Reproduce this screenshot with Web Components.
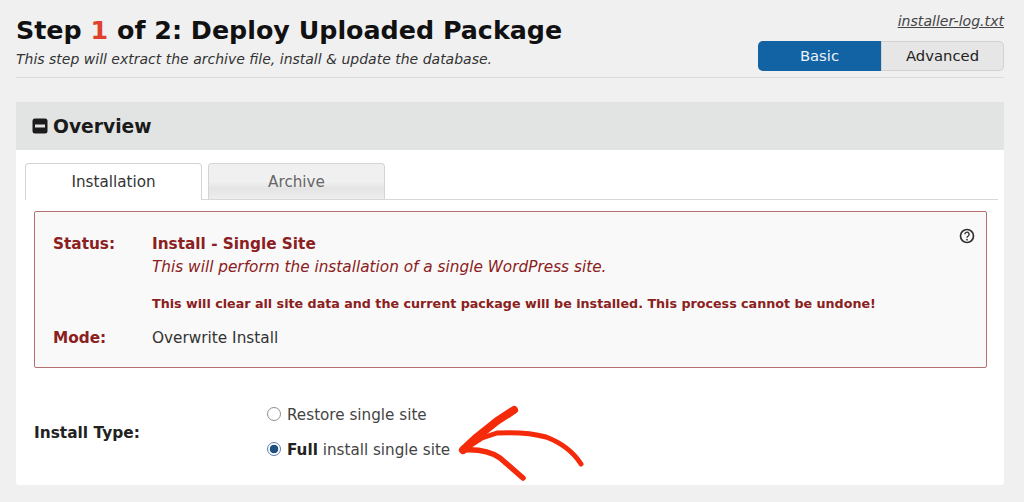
<!DOCTYPE html>
<html>
<head>
<meta charset="utf-8">
<title>Deploy Uploaded Package</title>
<style>
  html, body { margin: 0; height: 502px; overflow: hidden; background: #f0f0f1; }
  body { font-family: "DejaVu Sans", sans-serif; color: #222; }
</style>
</head>
<body>
<installer-step>
  <installer-header></installer-header>
  <overview-panel title="Overview">
    <tab-bar></tab-bar>
    <status-box></status-box>
    <install-type></install-type>
  </overview-panel>
</installer-step>

<script>
class InstallerStep extends HTMLElement {
  constructor() {
    super();
    this.attachShadow({ mode: 'open' }).innerHTML = `
      <style>
        :host { display: block; width: 988px; padding: 0 0 0 16px; }
      </style>
      <slot></slot>
    `;
  }
}

class InstallerHeader extends HTMLElement {
  constructor() {
    super();
    this.attachShadow({ mode: 'open' }).innerHTML = `
      <style>
        :host { display: flex; justify-content: space-between; height: 77px; border-bottom: 1px solid #dcdcdc; margin-bottom: 24px; }
        .left { padding-top: 14px; }
        h1 { margin: 0; font-size: 25.35px; line-height: 32px; font-weight: 700; color: #111; white-space: nowrap; }
        h1 span { color: #e0412c; }
        p { margin: 5px 0 0; font-size: 14px; line-height: 16px; font-style: italic; color: #333; white-space: nowrap; }
        .right { display: flex; flex-direction: column; align-items: flex-end; padding-top: 13px; }
        a { font-size: 14.1px; line-height: 16px; font-style: italic; color: #444; text-decoration: underline; }
        .toggle { display: flex; margin-top: 12px; height: 30px; width: 246px; border-radius: 5px; overflow: hidden; font-size: 14.8px; box-shadow: inset 0 0 0 1px #d2d2d2; }
        .toggle div { display: flex; align-items: center; justify-content: center; padding-bottom: 2px; box-sizing: border-box; }
        .on { width: 123px; background: #1263a3; color: #eef3f8; }
        .off { flex: 1; background: #e6e6e6; color: #222; box-shadow: inset 0 0 0 1px #d2d2d2; border-radius: 0 5px 5px 0; }
      </style>
      <div class="left">
        <h1>Step <span>1</span> of 2: Deploy Uploaded Package</h1>
        <p>This step will extract the archive file, install &amp; update the database.</p>
      </div>
      <div class="right">
        <a>installer-log.txt</a>
        <div class="toggle"><div class="on">Basic</div><div class="off">Advanced</div></div>
      </div>
    `;
  }
}

class OverviewPanel extends HTMLElement {
  constructor() {
    super();
    this.attachShadow({ mode: 'open' }).innerHTML = `
      <style>
        :host { display: block; position: relative; background: #fff; height: 383px; border-radius: 3px; }
        .head { display: flex; align-items: center; gap: 5px; height: 48px; padding-left: 16px; background: #e2e3e3; font-size: 18.7px; font-weight: 700; color: #1a1a1a; }
        .body { padding: 13px 0 0 9px; }
        svg { display: block; }
      </style>
      <div class="head">
        <svg width="16" height="16" viewBox="0 0 16 16"><rect x="0.5" y="0.5" width="15" height="15" rx="2.5" fill="#1c1c1c"/><rect x="3" y="6.5" width="10" height="3" fill="#e2e3e3"/></svg>
        <span></span>
      </div>
      <div class="body"><slot></slot></div>
    `;
    this.shadowRoot.querySelector('span').textContent = this.getAttribute('title');
  }
}

class TabBar extends HTMLElement {
  constructor() {
    super();
    this.attachShadow({ mode: 'open' }).innerHTML = `
      <style>
        :host { display: flex; gap: 6px; height: 36px; width: 973px; border-bottom: 1px solid #d8d8d8; font-size: 15.2px; }
        div { display: flex; align-items: center; justify-content: center; box-sizing: border-box; width: 177px; height: 36px; border: 1px solid #d4d4d4; border-bottom: 0; border-radius: 4px 4px 0 0; }
        .active { background: #fff; color: #333; height: 37px; padding-bottom: 1px; }
        .idle { background: linear-gradient(#f0f0f0 50%, #e4e4e4 70%, #eee); color: #666; }
      </style>
      <div class="active">Installation</div>
      <div class="idle">Archive</div>
    `;
  }
}

class StatusBox extends HTMLElement {
  constructor() {
    super();
    this.attachShadow({ mode: 'open' }).innerHTML = `
      <style>
        :host { display: block; position: relative; box-sizing: border-box; width: 953px; height: 157px; margin: 11px 0 0 9px; padding: 23px 0 0 18px; background: #f9f9f9; border: 1px solid #b5706f; border-radius: 2px; font-size: 15.3px; color: #8a2020; }
        .row { display: grid; grid-template-columns: 99px 1fr; }
        b.k { font-weight: 700; }
        .v { line-height: 18px; }
        .i { font-style: italic; line-height: 18px; margin-top: 5px; }
        .w { font-size: 12.7px; font-weight: 700; line-height: 16px; margin-top: 20px; }
        .mode { margin-top: 17px; line-height: 18px; }
        .mode .v { color: #333; }
        .help { position: absolute; top: 16px; right: 11px; display: block; }
      </style>
      <div class="row"><b class="k v">Status:</b><div>
        <b class="v">Install - Single Site</b>
        <div class="i">This will perform the installation of a single WordPress site.</div>
        <div class="w">This will clear all site data and the current package will be installed. This process cannot be undone!</div>
      </div></div>
      <div class="row mode"><b class="k">Mode:</b><div class="v">Overwrite Install</div></div>
      <svg class="help" width="16" height="16" viewBox="0 0 16 16"><circle cx="8" cy="8" r="6.5" fill="none" stroke="#333" stroke-width="1.7"/><path d="M5.9 6.3a2.1 2.1 0 1 1 3.3 1.7c-.8.5-1.2.9-1.2 1.7" fill="none" stroke="#333" stroke-width="1.4"/><circle cx="8" cy="11.7" r=".9" fill="#333"/></svg>
    `;
  }
}

class InstallType extends HTMLElement {
  constructor() {
    super();
    this.attachShadow({ mode: 'open' }).innerHTML = `
      <style>
        :host { display: flex; align-items: center; margin: 38px 0 0 9px; font-size: 15.2px; color: #444; }
        .label { width: 233px; font-weight: 700; color: #222; font-size: 15.4px; }
        .opts { display: flex; flex-direction: column; gap: 17px; }
        .opt { display: flex; align-items: center; gap: 6px; line-height: 18px; white-space: nowrap; }
        .opt b { color: #222; }
        .dot { box-sizing: border-box; width: 14px; height: 14px; margin-top: -3px; border-radius: 50%; border: 1px solid #8f8f8f; background: #fff; }
        .dot.on { border: 1px solid #5a7ea8; background: radial-gradient(circle, #1f4f80 0 4px, #fff 4.6px); }
        svg { position: absolute; left: 424px; top: 278px; }
      </style>
      <div class="label">Install Type:</div>
      <div class="opts">
        <div class="opt"><span class="dot"></span><span>Restore single site</span></div>
        <div class="opt"><span class="dot on"></span><span><b>Full</b> install single site</span></div>
      </div>
      <svg width="170" height="110" viewBox="440 380 170 110" fill="none" stroke="#f52a0a" stroke-linecap="round" stroke-linejoin="round">
        <path d="M514 410L497 421 477 437 463 450" stroke-width="8"/>
        <path d="M465 449L482 438 497 433C515 432 532 433 546 437 562 443 574 453 581 464" stroke-width="5"/>
        <path d="M463 450C478 449 490 451 500 458 508 465 516 472 523 478" stroke-width="5.5"/>
      </svg>
    `;
  }
}

customElements.define('installer-step', InstallerStep);
customElements.define('installer-header', InstallerHeader);
customElements.define('overview-panel', OverviewPanel);
customElements.define('tab-bar', TabBar);
customElements.define('status-box', StatusBox);
customElements.define('install-type', InstallType);
</script>
</body>
</html>
